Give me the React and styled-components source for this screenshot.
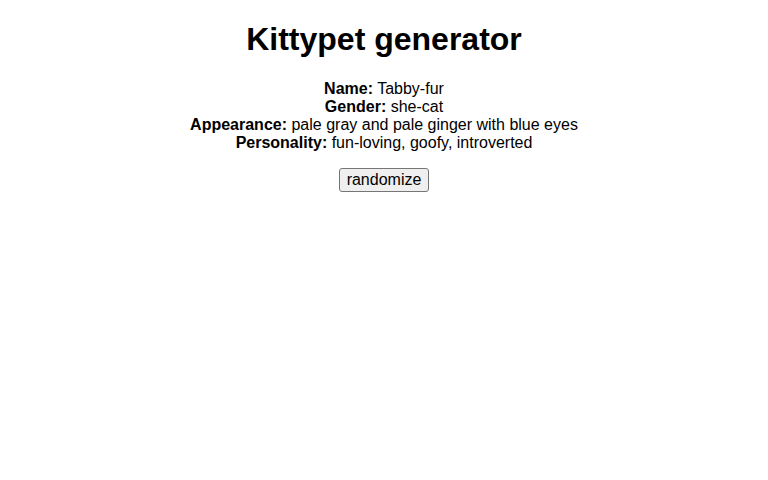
import React, { useState } from "react";
import styled, { createGlobalStyle } from "styled-components";

const GlobalStyle = createGlobalStyle`
  body {
    margin: 0 8px 8px;
    background: #ffffff;
    color: #000000;
    font-family: "Liberation Sans", Arial, sans-serif;
  }
`;

const Page = styled.main`
  text-align: center;
`;

const Title = styled.h1`
  font-size: 32px;
  font-weight: bold;
  margin: 21.44px 0;
`;

const Details = styled.div`
  font-size: 16px;
  line-height: 18px;
`;

const Row = styled.div``;

const Label = styled.b`
  font-weight: bold;
`;

const Actions = styled.p`
  margin: 16px 0;
`;

const Button = styled.button`
  font-family: "Liberation Sans", Arial, sans-serif;
  font-size: 16px;
  line-height: 18px;
  color: #000;
  background: #efefef;
  border: 1px solid #767676;
  border-radius: 3px;
  padding: 2px 7px;
  cursor: pointer;
`;

const names = ["Tabby-fur", "Misty", "Ginger", "Smudge"];
const genders = ["she-cat", "tom"];
const looks = [
  "pale gray and pale ginger with blue eyes",
  "black with green eyes",
  "white with amber eyes",
];
const traits = [
  "fun-loving, goofy, introverted",
  "curious, bold, friendly",
  "shy, gentle, clever",
];

const pick = (list) => list[Math.floor(Math.random() * list.length)];

export default function App() {
  const [cat, setCat] = useState({
    name: names[0],
    gender: genders[0],
    look: looks[0],
    trait: traits[0],
  });

  const randomize = () =>
    setCat({
      name: pick(names),
      gender: pick(genders),
      look: pick(looks),
      trait: pick(traits),
    });

  return (
    <>
      <GlobalStyle />
      <Page>
        <Title>Kittypet generator</Title>
        <Details>
          <Row>
            <Label>Name:</Label> {cat.name}
          </Row>
          <Row>
            <Label>Gender:</Label> {cat.gender}
          </Row>
          <Row>
            <Label>Appearance:</Label> {cat.look}
          </Row>
          <Row>
            <Label>Personality:</Label> {cat.trait}
          </Row>
        </Details>
        <Actions>
          <Button onClick={randomize}>randomize</Button>
        </Actions>
      </Page>
    </>
  );
}
